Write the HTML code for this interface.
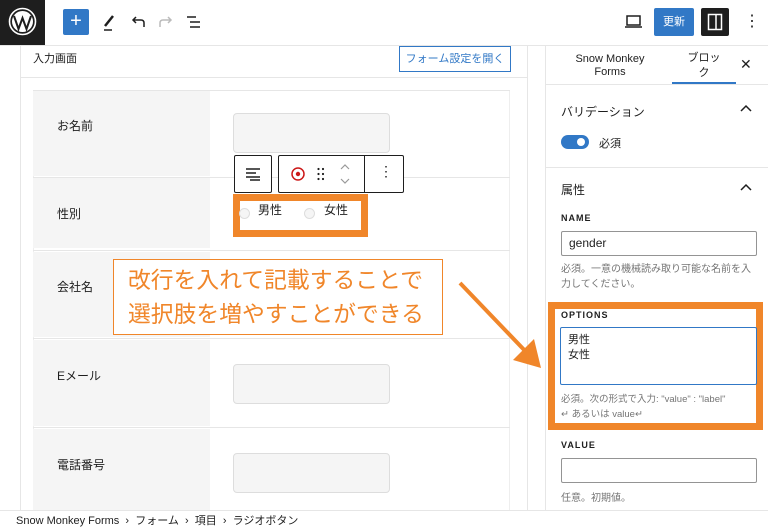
<!DOCTYPE html>
<html><head><meta charset="utf-8"><style>
*{box-sizing:border-box;margin:0;padding:0}
body{width:768px;height:527px;overflow:hidden;background:#fff;font-family:"Liberation Sans","Noto Sans CJK JP",sans-serif;color:#1e1e1e;position:relative;font-size:12px}
.a{position:absolute}
.lbl{background:#f5f5f5}
.inp{position:absolute;background:#f5f5f5;border:1px solid #ddd;border-radius:4px;width:157px;height:40px;left:233px}
.o{color:#f0862a}
</style></head><body>
<!-- top bar -->
<div class="a" style="left:0;top:0;width:45px;height:46px;background:#1e1e1e"></div>
<svg class="a" style="left:8px;top:7px" width="29" height="29" viewBox="0 0 29 29"><circle cx="14.5" cy="14.5" r="13" fill="none" stroke="#fff" stroke-width="1.6"/><circle cx="14.5" cy="14.5" r="10.5" fill="#fff"/><path d="M6 9 L10.5 22 L14.5 11 L18.5 22 L23 9" fill="none" stroke="#1e1e1e" stroke-width="2"/></svg>
<div class="a" style="left:63px;top:9px;width:26px;height:26px;background:#3178c6;border-radius:2px;color:#fff;font-size:20px;line-height:25px;text-align:center">+</div>
<svg class="a" style="left:102px;top:13px" width="14" height="18"><path d="M3 13 L11 3" stroke="#1e1e1e" stroke-width="2.5"/><path d="M2 17 H10" stroke="#1e1e1e" stroke-width="1.5"/></svg>
<svg class="a" style="left:130px;top:15px" width="16" height="14"><path d="M14 12 V8 Q14 5 11 5 H3 M6 2 L3 5 L6 8" fill="none" stroke="#1e1e1e" stroke-width="1.5"/></svg>
<svg class="a" style="left:158px;top:15px" width="16" height="14"><path d="M2 12 V8 Q2 5 5 5 H13 M10 2 L13 5 L10 8" fill="none" stroke="#bbb" stroke-width="1.5"/></svg>
<svg class="a" style="left:186px;top:15px" width="16" height="14"><path d="M1 2 H10 M4 7 H14 M4 12 H14" stroke="#1e1e1e" stroke-width="1.5"/></svg>
<svg class="a" style="left:625px;top:15px" width="18" height="14"><rect x="2" y="1" width="13" height="9" fill="none" stroke="#1e1e1e" stroke-width="1.5"/><path d="M0 12 H17" stroke="#1e1e1e" stroke-width="1.5"/></svg>
<div class="a" style="left:654px;top:8px;width:40px;height:28px;background:#3178c6;border-radius:2px;color:#fff;font-size:11px;line-height:28px;text-align:center">更新</div>
<div class="a" style="left:701px;top:8px;width:28px;height:28px;background:#1e1e1e;border-radius:2px"></div>
<svg class="a" style="left:707px;top:13px" width="16" height="18"><rect x="1.5" y="1.5" width="13" height="15" fill="none" stroke="#fff" stroke-width="1.5"/><path d="M9 2 V16" stroke="#fff" stroke-width="1.5"/></svg>
<div class="a" style="left:744px;top:10px;font-size:16px;line-height:24px">⋮</div>
<div class="a" style="left:0;top:45px;width:768px;height:1px;background:#e6e6e6"></div>
<!-- editor -->
<div class="a" style="left:20px;top:46px;width:1px;height:464px;background:#e6e6e6"></div>
<div class="a" style="left:527px;top:46px;width:1px;height:464px;background:#e6e6e6"></div>
<div class="a" style="left:33px;top:50px;font-size:11px">入力画面</div>
<div class="a" style="left:399px;top:46px;width:112px;height:26px;border:1px solid #3178c6;color:#3178c6;font-size:11px;line-height:24px;text-align:center">フォーム設定を開く</div>
<div class="a" style="left:20px;top:77px;width:507px;height:1px;background:#e6e6e6"></div>
<!-- table rows -->
<div class="a" style="left:33px;top:90px;width:477px;height:420px;border-left:1px solid #eee;border-right:1px solid #eee"></div>
<div class="a lbl" style="left:33px;top:90px;width:177px;height:86px"></div>
<div class="a lbl" style="left:33px;top:178px;width:177px;height:70px"></div>
<div class="a lbl" style="left:33px;top:252px;width:177px;height:85px"></div>
<div class="a lbl" style="left:33px;top:340px;width:177px;height:86px"></div>
<div class="a lbl" style="left:33px;top:429px;width:177px;height:81px"></div>
<div class="a" style="left:33px;top:90px;width:477px;height:1px;background:#e6e6e6"></div>
<div class="a" style="left:33px;top:177px;width:477px;height:1px;background:#e6e6e6"></div>
<div class="a" style="left:33px;top:250px;width:477px;height:1px;background:#e6e6e6"></div>
<div class="a" style="left:33px;top:338px;width:477px;height:1px;background:#e6e6e6"></div>
<div class="a" style="left:33px;top:427px;width:477px;height:1px;background:#e6e6e6"></div>
<div class="a" style="left:57px;top:117px;font-size:12px">お名前</div>
<div class="a" style="left:57px;top:205px;font-size:12px">性別</div>
<div class="a" style="left:57px;top:278px;font-size:12px">会社名</div>
<div class="a" style="left:57px;top:367px;font-size:12px">Eメール</div>
<div class="a" style="left:57px;top:456px;font-size:12px">電話番号</div>
<div class="inp" style="top:113px"></div>
<div class="inp" style="top:364px"></div>
<div class="inp" style="top:453px"></div>
<!-- block toolbar -->
<div class="a" style="left:234px;top:155px;width:38px;height:38px;border:1px solid #1e1e1e;border-radius:2px;background:#fff"></div>
<svg class="a" style="left:245px;top:167px" width="16" height="14"><path d="M1 2 H15 M1 6 H11 M1 10 H15 M5 13 H15" stroke="#1e1e1e" stroke-width="1.5"/></svg>
<div class="a" style="left:278px;top:155px;width:126px;height:38px;border:1px solid #1e1e1e;border-radius:2px;background:#fff"></div>
<div class="a" style="left:364px;top:155px;width:1px;height:38px;background:#1e1e1e"></div>
<svg class="a" style="left:290px;top:166px" width="16" height="16"><circle cx="8" cy="8" r="6" fill="none" stroke="#cc1818" stroke-width="1.5"/><circle cx="8" cy="8" r="2.2" fill="#cc1818"/></svg>
<svg class="a" style="left:316px;top:167px" width="10" height="14"><g fill="#1e1e1e"><circle cx="2.5" cy="2" r="1.1"/><circle cx="7" cy="2" r="1.1"/><circle cx="2.5" cy="7" r="1.1"/><circle cx="7" cy="7" r="1.1"/><circle cx="2.5" cy="12" r="1.1"/><circle cx="7" cy="12" r="1.1"/></g></svg>
<svg class="a" style="left:339px;top:162px" width="12" height="24"><path d="M2 7 L6 3 L10 7 M2 17 L6 21 L10 17" fill="none" stroke="#999" stroke-width="1.2"/></svg>
<div class="a" style="left:379px;top:163px;font-size:14px">⋮</div>
<!-- radio highlight -->
<div class="a" style="left:233px;top:194px;width:135px;height:43px;border:7px solid #f0862a;background:#fff"></div>
<div class="a" style="left:239px;top:208px;width:11px;height:11px;border:1px solid #ddd;border-radius:50%;background:#f5f5f5"></div>
<div class="a" style="left:258px;top:201px;font-size:12px">男性</div>
<div class="a" style="left:304px;top:208px;width:11px;height:11px;border:1px solid #ddd;border-radius:50%;background:#f5f5f5"></div>
<div class="a" style="left:324px;top:201px;font-size:12px">女性</div>
<!-- callout -->
<div class="a o" style="left:113px;top:259px;width:330px;height:76px;border:1px solid #f0862a;background:#fff;font-size:22.8px;line-height:34px;padding:3px 0 0 14px;white-space:nowrap">改行を入れて記載することで<br>選択肢を増やすことができる</div>
<svg class="a" style="left:455px;top:278px" width="95" height="100"><path d="M5 5 L75 78" stroke="#f0862a" stroke-width="4"/><path d="M58 82 L86 90 L79 61 Z" fill="#f0862a"/></svg>
<!-- sidebar -->
<div class="a" style="left:545px;top:46px;width:1px;height:464px;background:#e6e6e6"></div>
<div class="a" style="left:560px;top:53px;width:100px;text-align:center;font-size:11px;line-height:13px">Snow Monkey<br>Forms</div>
<div class="a" style="left:672px;top:51px;width:64px;text-align:center;font-size:11px;line-height:15px">ブロッ<br>ク</div>
<div class="a" style="left:672px;top:82px;width:64px;height:2px;background:#3178c6"></div>
<div class="a" style="left:740px;top:56px;font-size:14px">✕</div>
<div class="a" style="left:545px;top:84px;width:223px;height:1px;background:#e6e6e6"></div>
<div class="a" style="left:561px;top:103px;font-size:12px">バリデーション</div>
<svg class="a" style="left:740px;top:104px" width="12" height="8"><path d="M1 7 L6 2 L11 7" fill="none" stroke="#1e1e1e" stroke-width="1.5"/></svg>
<div class="a" style="left:561px;top:135px;width:28px;height:14px;border-radius:7px;background:#3178c6"></div>
<div class="a" style="left:577px;top:138px;width:8px;height:8px;border-radius:50%;background:#fff"></div>
<div class="a" style="left:599px;top:135px;font-size:11px">必須</div>
<div class="a" style="left:545px;top:167px;width:223px;height:1px;background:#e6e6e6"></div>
<div class="a" style="left:561px;top:181px;font-size:12px">属性</div>
<svg class="a" style="left:740px;top:183px" width="12" height="8"><path d="M1 7 L6 2 L11 7" fill="none" stroke="#1e1e1e" stroke-width="1.5"/></svg>
<div class="a" style="left:561px;top:213px;font-size:9px;font-weight:bold;letter-spacing:1px">NAME</div>
<div class="a" style="left:561px;top:231px;width:196px;height:25px;border:1px solid #949494;border-radius:2px;font-size:12px;line-height:23px;padding-left:7px">gender</div>
<div class="a" style="left:561px;top:262px;width:194px;font-size:10px;color:#757575;line-height:15px">必須。一意の機械読み取り可能な名前を入力してください。</div>
<div class="a" style="left:548px;top:302px;width:215px;height:128px;border:7px solid #f0862a;background:#fff"></div>
<div class="a" style="left:561px;top:310px;font-size:9px;font-weight:bold;letter-spacing:1px">OPTIONS</div>
<div class="a" style="left:560px;top:327px;width:197px;height:58px;border:1px solid #3178c6;border-radius:2px;font-size:11px;line-height:15px;padding:5px 7px">男性<br>女性</div>
<div class="a" style="left:561px;top:392px;width:200px;font-size:9.5px;color:#757575;line-height:15px;white-space:nowrap">必須。次の形式で入力: "value" : "label"<br>↵ あるいは value↵</div>
<div class="a" style="left:561px;top:440px;font-size:9px;font-weight:bold;letter-spacing:1px">VALUE</div>
<div class="a" style="left:561px;top:458px;width:196px;height:25px;border:1px solid #949494;border-radius:2px"></div>
<div class="a" style="left:561px;top:489px;font-size:10px;color:#757575">任意。初期値。</div>
<!-- breadcrumb -->
<div class="a" style="left:0;top:510px;width:768px;height:17px;background:#fff;border-top:1px solid #e6e6e6"></div>
<div class="a" style="left:16px;top:512px;font-size:11px;white-space:nowrap">Snow Monkey Forms&nbsp;&nbsp;›&nbsp;&nbsp;フォーム&nbsp;&nbsp;›&nbsp;&nbsp;項目&nbsp;&nbsp;›&nbsp;&nbsp;ラジオボタン</div>
</body></html>
